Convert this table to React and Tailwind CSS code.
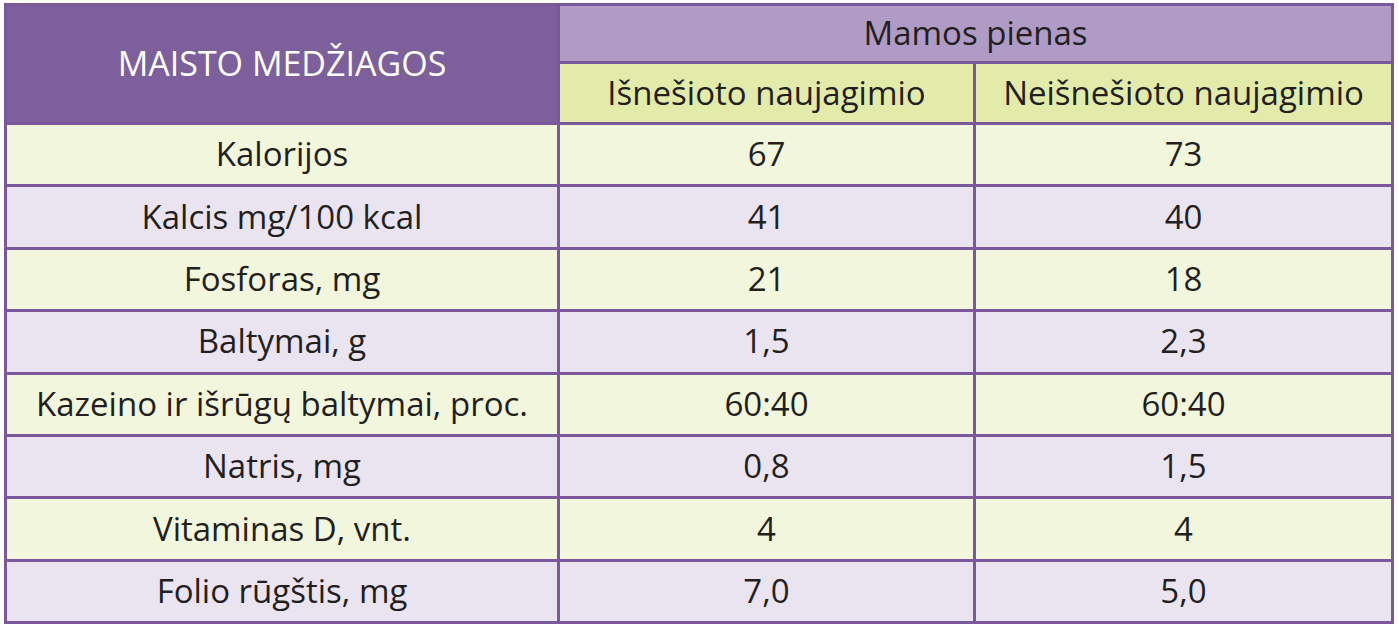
import React from "react";

const rows = [
  ["Kalorijos", "67", "73"],
  ["Kalcis mg/100 kcal", "41", "40"],
  ["Fosforas, mg", "21", "18"],
  ["Baltymai, g", "1,5", "2,3"],
  ["Kazeino ir išrūgų baltymai, proc.", "60:40", "60:40"],
  ["Natris, mg", "0,8", "1,5"],
  ["Vitaminas D, vnt.", "4", "4"],
  ["Folio rūgštis, mg", "7,0", "5,0"],
];

export default function App() {
  return (
    <div className="w-[1398px] h-[628px] bg-white pt-[3px] pl-[4px]" style={{ fontFamily: '"Open Sans", sans-serif' }}>
      <table className="table-fixed border-collapse w-[1387px] text-[#231f20] text-[33px] leading-none">
        <colgroup>
          <col className="w-[553px]" />
          <col className="w-[416px]" />
          <col className="w-[418px]" />
        </colgroup>
        <thead>
          <tr className="h-[58px]">
            <th rowSpan={2} className="border-[3px] border-[#7a589b] bg-[#7d5f9c] text-white font-normal text-[34px] pb-[2px]">
              MAISTO MEDŽIAGOS
            </th>
            <th colSpan={2} className="border-[3px] border-[#7a589b] bg-[#b09bc6] font-normal pb-[2px]">
              Mamos pienas
            </th>
          </tr>
          <tr className="h-[61px]">
            <th className="border-[3px] border-[#7a589b] bg-[#e3ebab] font-normal pb-[2px]">Išnešioto naujagimio</th>
            <th className="border-[3px] border-[#7a589b] bg-[#e3ebab] font-normal pb-[2px]">Neišnešioto naujagimio</th>
          </tr>
        </thead>
        <tbody>
          {rows.map((r, i) => (
            <tr key={i} className={`h-[62.4px] ${i % 2 === 0 ? "bg-[#f2f6dc]" : "bg-[#eae4f1]"}`}>
              {r.map((c, j) => (
                <td key={j} className="border-[3px] border-[#7a589b] text-center pb-[2px]">{c}</td>
              ))}
            </tr>
          ))}
        </tbody>
      </table>
    </div>
  );
}
